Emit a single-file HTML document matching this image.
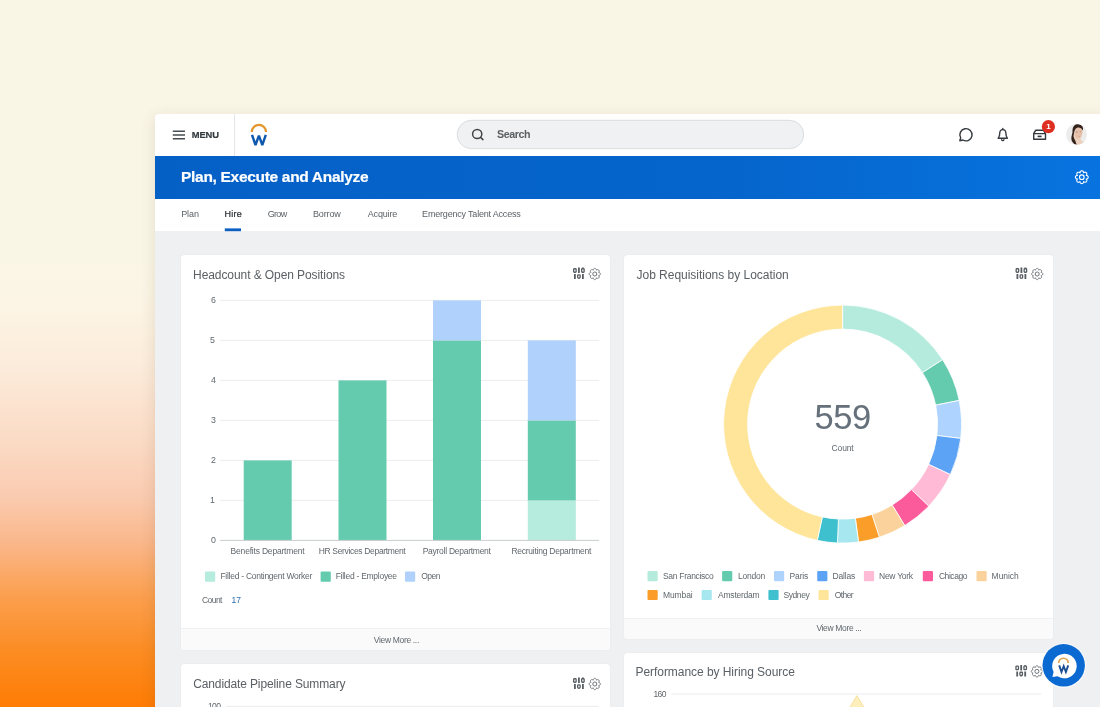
<!DOCTYPE html>
<html><head><meta charset="utf-8">
<style>
*{box-sizing:border-box;margin:0;padding:0}
html,body{width:1100px;height:707px;overflow:hidden}
body{font-family:"Liberation Sans",sans-serif;position:relative;
background:linear-gradient(180deg,#faf6e6 0%,#faf6e6 37%,#fcf4e4 43.8%,#fcebda 52.3%,#fbdcc6 61.8%,#facbb0 70.2%,#fab78b 76.7%,#fb9f4e 84.4%,#fc8c22 92.2%,#fe7c04 100%);}
.abs{position:absolute}
#win{position:absolute;left:155px;top:114px;width:960px;height:620px;background:#eef0f2;border-radius:4px 0 0 0;box-shadow:-2px 2px 14px rgba(70,50,10,.10);overflow:hidden}
#nav{position:absolute;left:0;top:0;width:100%;height:42px;background:#fff}
#hdr{position:absolute;left:0;top:42px;width:100%;height:43px;background:linear-gradient(90deg,#0560c6 0%,#0565cc 60%,#0874e0 100%)}
#tabs{position:absolute;left:0;top:85px;width:100%;height:32px;background:#fff}
.card{position:absolute;background:#fff;border-radius:3px;box-shadow:0 0 1px rgba(0,0,0,.12);overflow:hidden}
.vm{position:absolute;left:0;bottom:0;width:100%;background:#fafafa;border-top:1px solid #f0f1f2}
#tx{position:absolute;left:0;top:0;width:1100px;height:707px;will-change:transform}
.t{position:absolute;white-space:nowrap;line-height:1}
</style></head><body>
<div id="win">
<div id="nav"></div>
<div id="hdr"></div>
<div id="tabs"></div>
<div class="card" style="left:26px;top:141px;width:429px;height:395px"><div class="vm" style="height:22px"></div></div>
<div class="card" style="left:469px;top:141px;width:429px;height:384px"><div class="vm" style="height:21px"></div></div>
<div class="card" style="left:26px;top:550px;width:429px;height:100px"></div>
<div class="card" style="left:469px;top:539px;width:429px;height:100px"></div>
</div>
<svg class="abs" style="left:0;top:0" width="1100" height="707" viewBox="0 0 1100 707">
<defs><radialGradient id="fabsh"><stop offset="0.85" stop-color="#1c3a66" stop-opacity="0.25"/><stop offset="1" stop-color="#1c3a66" stop-opacity="0"/></radialGradient></defs>
<!-- nav icons -->
<path d="M172.8 131.3H185M172.8 135H185M172.8 138.7H185" stroke="#474d52" stroke-width="1.5"/>
<path d="M234.5 114V156" stroke="#e4e6e8" stroke-width="1"/>
<path d="M251.75 132A7.15 7.15 0 0 1 266.05 132" fill="none" stroke="#e3962c" stroke-width="2.3"/>
<path d="M252 134.8L255.5 145L258.9 135.7L262.3 145L265.8 134.8" fill="none" stroke="#0f58ad" stroke-width="2.4" stroke-linejoin="miter" stroke-miterlimit="2"/>
<rect x="457.2" y="120.3" width="346.5" height="28.4" rx="14.2" fill="#f0f1f2" stroke="#dadde0" stroke-width="1"/>
<circle cx="477.2" cy="134" r="4.6" fill="none" stroke="#3f4549" stroke-width="1.5"/><path d="M480.6 137.4L483 139.6" stroke="#3f4549" stroke-width="1.5" stroke-linecap="round"/>
<!-- chat -->
<path d="M959.8 140.7L960.7 137.8A6.1 6.1 0 1 1 962.9 140Z" fill="none" stroke="#33393e" stroke-width="1.4" stroke-linejoin="round"/>
<!-- bell -->
<path d="M998.2 138.2H1007.4C1006.2 137 1005.9 136 1005.9 133.6C1005.9 131.2 1004.6 129.6 1002.8 129.6C1001 129.6 999.7 131.2 999.7 133.6C999.7 136 999.4 137 998.2 138.2Z" fill="none" stroke="#33393e" stroke-width="1.4" stroke-linejoin="round"/>
<path d="M1002.8 129.4V128.4M1001.6 139.8A1.3 1.3 0 0 0 1004 139.8" fill="none" stroke="#33393e" stroke-width="1.4" stroke-linecap="round"/>
<!-- inbox -->
<path d="M1033.7 133.6L1035.6 130.3H1043.6L1045.5 133.6V139.2H1033.7ZM1033.7 133.6H1045.5" fill="none" stroke="#33393e" stroke-width="1.4" stroke-linejoin="round"/>
<path d="M1037.6 136.4H1041.6" stroke="#33393e" stroke-width="1.6"/>
<circle cx="1048.4" cy="126.7" r="6.6" fill="#de2e21"/>
<!-- avatar -->
<clipPath id="av"><circle cx="1076.5" cy="134.5" r="10.5"/></clipPath>
<g clip-path="url(#av)"><rect x="1065" y="123" width="23" height="23" fill="#ececec"/>
<path d="M1073.2 133L1078.1 138.7L1080.5 137.7L1081.2 140.6L1083.9 142L1083.6 145.4L1075.6 145.2L1073.4 140.6Z" fill="#ecd0be"/>
<path d="M1075.2 129.5L1078.1 127.6L1081 128.3L1082.4 130.5C1082.6 132 1082.5 133.4 1082.2 134.4C1081.8 135.8 1081.2 137 1080.5 137.7C1079.6 138.6 1078.8 138.8 1078.1 138.7C1077.2 138.5 1076.3 137.9 1075.7 137.2C1074.8 136.3 1074.3 135.4 1074.2 134.4Z" fill="#e6c0a9"/>
<path d="M1072.5 132.4C1072.3 130.6 1072.5 129 1073 127.6C1073.5 126.3 1074.2 125.4 1075.2 124.7C1076.1 124.2 1077.1 124 1078.1 124C1079.3 124.1 1080.5 124.5 1081.4 125.2C1082.5 126.2 1083.1 127.6 1083.1 129.1L1082.4 130.5C1082.1 129.5 1081.6 128.8 1081 128.3C1080 127.8 1079 127.6 1078.1 127.6C1076.8 127.9 1075.8 128.6 1075.2 129.5C1074.6 130.5 1074.3 131.4 1074.2 132.4C1073.8 133.8 1073.5 135 1073.5 136.3C1073.8 137.8 1074.4 139.3 1075.2 140.6L1076.6 144.4L1074.2 144C1073.2 143.2 1072.4 142.2 1071.8 141.1C1071.4 139.8 1071.3 138.5 1071.4 137.2C1071.6 135.6 1072 134 1072.5 132.4Z" fill="#35221b"/>
<ellipse cx="1076.9" cy="132" rx="0.9" ry="0.4" fill="#4a3228" opacity="0.6"/><ellipse cx="1080.3" cy="131.8" rx="0.8" ry="0.4" fill="#4a3228" opacity="0.6"/><ellipse cx="1079.2" cy="136.6" rx="1" ry="0.45" fill="#d27f78" opacity="0.7"/>
</g>
<!-- header gear -->
<path d="M1081.80 170.80L1081.97 170.81L1082.13 170.84L1082.30 170.88L1082.46 170.94L1082.61 171.02L1082.76 171.12L1082.91 171.23L1083.04 171.36L1083.17 171.51L1083.28 171.67L1083.39 171.85L1083.48 172.04L1083.55 172.25L1083.61 172.49L1083.61 172.82L1083.85 172.59L1084.06 172.46L1084.26 172.37L1084.46 172.29L1084.66 172.24L1084.86 172.21L1085.05 172.20L1085.24 172.20L1085.42 172.22L1085.59 172.26L1085.76 172.31L1085.92 172.38L1086.06 172.46L1086.20 172.56L1086.33 172.67L1086.44 172.80L1086.54 172.94L1086.62 173.08L1086.69 173.24L1086.74 173.41L1086.78 173.58L1086.80 173.76L1086.80 173.95L1086.79 174.14L1086.76 174.34L1086.71 174.54L1086.63 174.74L1086.54 174.94L1086.41 175.15L1086.18 175.39L1086.51 175.39L1086.75 175.45L1086.96 175.52L1087.15 175.61L1087.33 175.72L1087.49 175.83L1087.64 175.96L1087.77 176.09L1087.88 176.24L1087.98 176.39L1088.06 176.54L1088.12 176.70L1088.16 176.87L1088.19 177.03L1088.20 177.20L1088.19 177.37L1088.16 177.53L1088.12 177.70L1088.06 177.86L1087.98 178.01L1087.88 178.16L1087.77 178.31L1087.64 178.44L1087.49 178.57L1087.33 178.68L1087.15 178.79L1086.96 178.88L1086.75 178.95L1086.51 179.01L1086.18 179.01L1086.41 179.25L1086.54 179.46L1086.63 179.66L1086.71 179.86L1086.76 180.06L1086.79 180.26L1086.80 180.45L1086.80 180.64L1086.78 180.82L1086.74 180.99L1086.69 181.16L1086.62 181.32L1086.54 181.46L1086.44 181.60L1086.33 181.73L1086.20 181.84L1086.06 181.94L1085.92 182.02L1085.76 182.09L1085.59 182.14L1085.42 182.18L1085.24 182.20L1085.05 182.20L1084.86 182.19L1084.66 182.16L1084.46 182.11L1084.26 182.03L1084.06 181.94L1083.85 181.81L1083.61 181.58L1083.61 181.91L1083.55 182.15L1083.48 182.36L1083.39 182.55L1083.28 182.73L1083.17 182.89L1083.04 183.04L1082.91 183.17L1082.76 183.28L1082.61 183.38L1082.46 183.46L1082.30 183.52L1082.13 183.56L1081.97 183.59L1081.80 183.60L1081.63 183.59L1081.47 183.56L1081.30 183.52L1081.14 183.46L1080.99 183.38L1080.84 183.28L1080.69 183.17L1080.56 183.04L1080.43 182.89L1080.32 182.73L1080.21 182.55L1080.12 182.36L1080.05 182.15L1079.99 181.91L1079.99 181.58L1079.75 181.81L1079.54 181.94L1079.34 182.03L1079.14 182.11L1078.94 182.16L1078.74 182.19L1078.55 182.20L1078.36 182.20L1078.18 182.18L1078.01 182.14L1077.84 182.09L1077.68 182.02L1077.54 181.94L1077.40 181.84L1077.27 181.73L1077.16 181.60L1077.06 181.46L1076.98 181.32L1076.91 181.16L1076.86 180.99L1076.82 180.82L1076.80 180.64L1076.80 180.45L1076.81 180.26L1076.84 180.06L1076.89 179.86L1076.97 179.66L1077.06 179.46L1077.19 179.25L1077.42 179.01L1077.09 179.01L1076.85 178.95L1076.64 178.88L1076.45 178.79L1076.27 178.68L1076.11 178.57L1075.96 178.44L1075.83 178.31L1075.72 178.16L1075.62 178.01L1075.54 177.86L1075.48 177.70L1075.44 177.53L1075.41 177.37L1075.40 177.20L1075.41 177.03L1075.44 176.87L1075.48 176.70L1075.54 176.54L1075.62 176.39L1075.72 176.24L1075.83 176.09L1075.96 175.96L1076.11 175.83L1076.27 175.72L1076.45 175.61L1076.64 175.52L1076.85 175.45L1077.09 175.39L1077.42 175.39L1077.19 175.15L1077.06 174.94L1076.97 174.74L1076.89 174.54L1076.84 174.34L1076.81 174.14L1076.80 173.95L1076.80 173.76L1076.82 173.58L1076.86 173.41L1076.91 173.24L1076.98 173.08L1077.06 172.94L1077.16 172.80L1077.27 172.67L1077.40 172.56L1077.54 172.46L1077.68 172.38L1077.84 172.31L1078.01 172.26L1078.18 172.22L1078.36 172.20L1078.55 172.20L1078.74 172.21L1078.94 172.24L1079.14 172.29L1079.34 172.37L1079.54 172.46L1079.75 172.59L1079.99 172.82L1079.99 172.49L1080.05 172.25L1080.12 172.04L1080.21 171.85L1080.32 171.67L1080.43 171.51L1080.56 171.36L1080.69 171.23L1080.84 171.12L1080.99 171.02L1081.14 170.94L1081.30 170.88L1081.47 170.84L1081.63 170.81Z" fill="none" stroke="#ffffff" stroke-width="1.1" stroke-linejoin="round"/><circle cx="1081.8" cy="177.2" r="2.30" fill="none" stroke="#ffffff" stroke-width="1.1"/>
<!-- tab underline -->
<rect x="224.8" y="228.4" width="16.2" height="2.8" fill="#0b5fc0"/>
<!-- card1 chart -->
<path d="M220 300.4H599" stroke="#ecedef" stroke-width="1"/><path d="M220 340.4H599" stroke="#ecedef" stroke-width="1"/><path d="M220 380.4H599" stroke="#ecedef" stroke-width="1"/><path d="M220 420.4H599" stroke="#ecedef" stroke-width="1"/><path d="M220 460.4H599" stroke="#ecedef" stroke-width="1"/><path d="M220 500.4H599" stroke="#ecedef" stroke-width="1"/>
<rect x="243.7" y="460.4" width="48" height="80" fill="#65cbae"/>
<rect x="338.5" y="380.4" width="48" height="160" fill="#65cbae"/>
<rect x="433" y="340.4" width="48" height="200" fill="#65cbae"/>
<rect x="433" y="300.4" width="48" height="40" fill="#afd1fb"/>
<rect x="527.8" y="500.4" width="48" height="40" fill="#b5ecdd"/>
<rect x="527.8" y="420.4" width="48" height="80" fill="#65cbae"/>
<rect x="527.8" y="340.4" width="48" height="80" fill="#afd1fb"/>
<path d="M220 540.4H599" stroke="#c9cdd1" stroke-width="1"/>
<rect x="205" y="571.5" width="10.2" height="10.2" rx="1" fill="#b5ecdd"/><rect x="320.6" y="571.5" width="10.2" height="10.2" rx="1" fill="#65cbae"/><rect x="405" y="571.5" width="10.2" height="10.2" rx="1" fill="#afd1fb"/>
<g transform="translate(572.9,267.4)" fill="none" stroke="#575d62">
<path d="M2 6.7V11.7M6 0.2V5.6M6 11V11.7M10 6.7V11.7M10 0.2V1" stroke-width="1.8"/>
<rect x="0.75" y="1.35" width="2.5" height="3.5" rx="0.7" stroke-width="1.3"/><rect x="4.75" y="7.45" width="2.5" height="3.2" rx="0.7" stroke-width="1.3"/><rect x="8.75" y="1.35" width="2.5" height="3.5" rx="0.7" stroke-width="1.3"/></g><path d="M594.80 268.40L594.95 268.41L595.09 268.43L595.24 268.47L595.38 268.53L595.51 268.60L595.64 268.68L595.77 268.78L595.89 268.89L596.00 269.02L596.10 269.16L596.19 269.32L596.27 269.48L596.33 269.67L596.38 269.88L596.39 270.17L596.59 269.97L596.78 269.86L596.96 269.77L597.13 269.71L597.30 269.66L597.48 269.63L597.64 269.62L597.81 269.62L597.97 269.64L598.12 269.68L598.26 269.72L598.40 269.78L598.53 269.86L598.65 269.94L598.76 270.04L598.86 270.15L598.94 270.27L599.02 270.40L599.08 270.54L599.12 270.68L599.16 270.83L599.18 270.99L599.18 271.16L599.17 271.32L599.14 271.50L599.09 271.67L599.03 271.84L598.94 272.02L598.83 272.21L598.63 272.41L598.92 272.42L599.13 272.47L599.32 272.53L599.48 272.61L599.64 272.70L599.78 272.80L599.91 272.91L600.02 273.03L600.12 273.16L600.20 273.29L600.27 273.42L600.33 273.56L600.37 273.71L600.39 273.85L600.40 274.00L600.39 274.15L600.37 274.29L600.33 274.44L600.27 274.58L600.20 274.71L600.12 274.84L600.02 274.97L599.91 275.09L599.78 275.20L599.64 275.30L599.48 275.39L599.32 275.47L599.13 275.53L598.92 275.58L598.63 275.59L598.83 275.79L598.94 275.98L599.03 276.16L599.09 276.33L599.14 276.50L599.17 276.68L599.18 276.84L599.18 277.01L599.16 277.17L599.12 277.32L599.08 277.46L599.02 277.60L598.94 277.73L598.86 277.85L598.76 277.96L598.65 278.06L598.53 278.14L598.40 278.22L598.26 278.28L598.12 278.32L597.97 278.36L597.81 278.38L597.64 278.38L597.48 278.37L597.30 278.34L597.13 278.29L596.96 278.23L596.78 278.14L596.59 278.03L596.39 277.83L596.38 278.12L596.33 278.33L596.27 278.52L596.19 278.68L596.10 278.84L596.00 278.98L595.89 279.11L595.77 279.22L595.64 279.32L595.51 279.40L595.38 279.47L595.24 279.53L595.09 279.57L594.95 279.59L594.80 279.60L594.65 279.59L594.51 279.57L594.36 279.53L594.22 279.47L594.09 279.40L593.96 279.32L593.83 279.22L593.71 279.11L593.60 278.98L593.50 278.84L593.41 278.68L593.33 278.52L593.27 278.33L593.22 278.12L593.21 277.83L593.01 278.03L592.82 278.14L592.64 278.23L592.47 278.29L592.30 278.34L592.12 278.37L591.96 278.38L591.79 278.38L591.63 278.36L591.48 278.32L591.34 278.28L591.20 278.22L591.07 278.14L590.95 278.06L590.84 277.96L590.74 277.85L590.66 277.73L590.58 277.60L590.52 277.46L590.48 277.32L590.44 277.17L590.42 277.01L590.42 276.84L590.43 276.68L590.46 276.50L590.51 276.33L590.57 276.16L590.66 275.98L590.77 275.79L590.97 275.59L590.68 275.58L590.47 275.53L590.28 275.47L590.12 275.39L589.96 275.30L589.82 275.20L589.69 275.09L589.58 274.97L589.48 274.84L589.40 274.71L589.33 274.58L589.27 274.44L589.23 274.29L589.21 274.15L589.20 274.00L589.21 273.85L589.23 273.71L589.27 273.56L589.33 273.42L589.40 273.29L589.48 273.16L589.58 273.03L589.69 272.91L589.82 272.80L589.96 272.70L590.12 272.61L590.28 272.53L590.47 272.47L590.68 272.42L590.97 272.41L590.77 272.21L590.66 272.02L590.57 271.84L590.51 271.67L590.46 271.50L590.43 271.32L590.42 271.16L590.42 270.99L590.44 270.83L590.48 270.68L590.52 270.54L590.58 270.40L590.66 270.27L590.74 270.15L590.84 270.04L590.95 269.94L591.07 269.86L591.20 269.78L591.34 269.72L591.48 269.68L591.63 269.64L591.79 269.62L591.96 269.62L592.12 269.63L592.30 269.66L592.47 269.71L592.64 269.77L592.82 269.86L593.01 269.97L593.21 270.17L593.22 269.88L593.27 269.67L593.33 269.48L593.41 269.32L593.50 269.16L593.60 269.02L593.71 268.89L593.83 268.78L593.96 268.68L594.09 268.60L594.22 268.53L594.36 268.47L594.51 268.43L594.65 268.41Z" fill="none" stroke="#6c7277" stroke-width="1" stroke-linejoin="round"/><circle cx="594.8" cy="274" r="2.02" fill="none" stroke="#6c7277" stroke-width="1"/>
<g transform="translate(1015.4,267.4)" fill="none" stroke="#575d62">
<path d="M2 6.7V11.7M6 0.2V5.6M6 11V11.7M10 6.7V11.7M10 0.2V1" stroke-width="1.8"/>
<rect x="0.75" y="1.35" width="2.5" height="3.5" rx="0.7" stroke-width="1.3"/><rect x="4.75" y="7.45" width="2.5" height="3.2" rx="0.7" stroke-width="1.3"/><rect x="8.75" y="1.35" width="2.5" height="3.5" rx="0.7" stroke-width="1.3"/></g><path d="M1037.20 268.40L1037.35 268.41L1037.49 268.43L1037.64 268.47L1037.78 268.53L1037.91 268.60L1038.04 268.68L1038.17 268.78L1038.29 268.89L1038.40 269.02L1038.50 269.16L1038.59 269.32L1038.67 269.48L1038.73 269.67L1038.78 269.88L1038.79 270.17L1038.99 269.97L1039.18 269.86L1039.36 269.77L1039.53 269.71L1039.70 269.66L1039.88 269.63L1040.04 269.62L1040.21 269.62L1040.37 269.64L1040.52 269.68L1040.66 269.72L1040.80 269.78L1040.93 269.86L1041.05 269.94L1041.16 270.04L1041.26 270.15L1041.34 270.27L1041.42 270.40L1041.48 270.54L1041.52 270.68L1041.56 270.83L1041.58 270.99L1041.58 271.16L1041.57 271.32L1041.54 271.50L1041.49 271.67L1041.43 271.84L1041.34 272.02L1041.23 272.21L1041.03 272.41L1041.32 272.42L1041.53 272.47L1041.72 272.53L1041.88 272.61L1042.04 272.70L1042.18 272.80L1042.31 272.91L1042.42 273.03L1042.52 273.16L1042.60 273.29L1042.67 273.42L1042.73 273.56L1042.77 273.71L1042.79 273.85L1042.80 274.00L1042.79 274.15L1042.77 274.29L1042.73 274.44L1042.67 274.58L1042.60 274.71L1042.52 274.84L1042.42 274.97L1042.31 275.09L1042.18 275.20L1042.04 275.30L1041.88 275.39L1041.72 275.47L1041.53 275.53L1041.32 275.58L1041.03 275.59L1041.23 275.79L1041.34 275.98L1041.43 276.16L1041.49 276.33L1041.54 276.50L1041.57 276.68L1041.58 276.84L1041.58 277.01L1041.56 277.17L1041.52 277.32L1041.48 277.46L1041.42 277.60L1041.34 277.73L1041.26 277.85L1041.16 277.96L1041.05 278.06L1040.93 278.14L1040.80 278.22L1040.66 278.28L1040.52 278.32L1040.37 278.36L1040.21 278.38L1040.04 278.38L1039.88 278.37L1039.70 278.34L1039.53 278.29L1039.36 278.23L1039.18 278.14L1038.99 278.03L1038.79 277.83L1038.78 278.12L1038.73 278.33L1038.67 278.52L1038.59 278.68L1038.50 278.84L1038.40 278.98L1038.29 279.11L1038.17 279.22L1038.04 279.32L1037.91 279.40L1037.78 279.47L1037.64 279.53L1037.49 279.57L1037.35 279.59L1037.20 279.60L1037.05 279.59L1036.91 279.57L1036.76 279.53L1036.62 279.47L1036.49 279.40L1036.36 279.32L1036.23 279.22L1036.11 279.11L1036.00 278.98L1035.90 278.84L1035.81 278.68L1035.73 278.52L1035.67 278.33L1035.62 278.12L1035.61 277.83L1035.41 278.03L1035.22 278.14L1035.04 278.23L1034.87 278.29L1034.70 278.34L1034.52 278.37L1034.36 278.38L1034.19 278.38L1034.03 278.36L1033.88 278.32L1033.74 278.28L1033.60 278.22L1033.47 278.14L1033.35 278.06L1033.24 277.96L1033.14 277.85L1033.06 277.73L1032.98 277.60L1032.92 277.46L1032.88 277.32L1032.84 277.17L1032.82 277.01L1032.82 276.84L1032.83 276.68L1032.86 276.50L1032.91 276.33L1032.97 276.16L1033.06 275.98L1033.17 275.79L1033.37 275.59L1033.08 275.58L1032.87 275.53L1032.68 275.47L1032.52 275.39L1032.36 275.30L1032.22 275.20L1032.09 275.09L1031.98 274.97L1031.88 274.84L1031.80 274.71L1031.73 274.58L1031.67 274.44L1031.63 274.29L1031.61 274.15L1031.60 274.00L1031.61 273.85L1031.63 273.71L1031.67 273.56L1031.73 273.42L1031.80 273.29L1031.88 273.16L1031.98 273.03L1032.09 272.91L1032.22 272.80L1032.36 272.70L1032.52 272.61L1032.68 272.53L1032.87 272.47L1033.08 272.42L1033.37 272.41L1033.17 272.21L1033.06 272.02L1032.97 271.84L1032.91 271.67L1032.86 271.50L1032.83 271.32L1032.82 271.16L1032.82 270.99L1032.84 270.83L1032.88 270.68L1032.92 270.54L1032.98 270.40L1033.06 270.27L1033.14 270.15L1033.24 270.04L1033.35 269.94L1033.47 269.86L1033.60 269.78L1033.74 269.72L1033.88 269.68L1034.03 269.64L1034.19 269.62L1034.36 269.62L1034.52 269.63L1034.70 269.66L1034.87 269.71L1035.04 269.77L1035.22 269.86L1035.41 269.97L1035.61 270.17L1035.62 269.88L1035.67 269.67L1035.73 269.48L1035.81 269.32L1035.90 269.16L1036.00 269.02L1036.11 268.89L1036.23 268.78L1036.36 268.68L1036.49 268.60L1036.62 268.53L1036.76 268.47L1036.91 268.43L1037.05 268.41Z" fill="none" stroke="#6c7277" stroke-width="1" stroke-linejoin="round"/><circle cx="1037.2" cy="274" r="2.02" fill="none" stroke="#6c7277" stroke-width="1"/>
<g transform="translate(572.9,677.4)" fill="none" stroke="#575d62">
<path d="M2 6.7V11.7M6 0.2V5.6M6 11V11.7M10 6.7V11.7M10 0.2V1" stroke-width="1.8"/>
<rect x="0.75" y="1.35" width="2.5" height="3.5" rx="0.7" stroke-width="1.3"/><rect x="4.75" y="7.45" width="2.5" height="3.2" rx="0.7" stroke-width="1.3"/><rect x="8.75" y="1.35" width="2.5" height="3.5" rx="0.7" stroke-width="1.3"/></g><path d="M594.80 678.40L594.95 678.41L595.09 678.43L595.24 678.47L595.38 678.53L595.51 678.60L595.64 678.68L595.77 678.78L595.89 678.89L596.00 679.02L596.10 679.16L596.19 679.32L596.27 679.48L596.33 679.67L596.38 679.88L596.39 680.17L596.59 679.97L596.78 679.86L596.96 679.77L597.13 679.71L597.30 679.66L597.48 679.63L597.64 679.62L597.81 679.62L597.97 679.64L598.12 679.68L598.26 679.72L598.40 679.78L598.53 679.86L598.65 679.94L598.76 680.04L598.86 680.15L598.94 680.27L599.02 680.40L599.08 680.54L599.12 680.68L599.16 680.83L599.18 680.99L599.18 681.16L599.17 681.32L599.14 681.50L599.09 681.67L599.03 681.84L598.94 682.02L598.83 682.21L598.63 682.41L598.92 682.42L599.13 682.47L599.32 682.53L599.48 682.61L599.64 682.70L599.78 682.80L599.91 682.91L600.02 683.03L600.12 683.16L600.20 683.29L600.27 683.42L600.33 683.56L600.37 683.71L600.39 683.85L600.40 684.00L600.39 684.15L600.37 684.29L600.33 684.44L600.27 684.58L600.20 684.71L600.12 684.84L600.02 684.97L599.91 685.09L599.78 685.20L599.64 685.30L599.48 685.39L599.32 685.47L599.13 685.53L598.92 685.58L598.63 685.59L598.83 685.79L598.94 685.98L599.03 686.16L599.09 686.33L599.14 686.50L599.17 686.68L599.18 686.84L599.18 687.01L599.16 687.17L599.12 687.32L599.08 687.46L599.02 687.60L598.94 687.73L598.86 687.85L598.76 687.96L598.65 688.06L598.53 688.14L598.40 688.22L598.26 688.28L598.12 688.32L597.97 688.36L597.81 688.38L597.64 688.38L597.48 688.37L597.30 688.34L597.13 688.29L596.96 688.23L596.78 688.14L596.59 688.03L596.39 687.83L596.38 688.12L596.33 688.33L596.27 688.52L596.19 688.68L596.10 688.84L596.00 688.98L595.89 689.11L595.77 689.22L595.64 689.32L595.51 689.40L595.38 689.47L595.24 689.53L595.09 689.57L594.95 689.59L594.80 689.60L594.65 689.59L594.51 689.57L594.36 689.53L594.22 689.47L594.09 689.40L593.96 689.32L593.83 689.22L593.71 689.11L593.60 688.98L593.50 688.84L593.41 688.68L593.33 688.52L593.27 688.33L593.22 688.12L593.21 687.83L593.01 688.03L592.82 688.14L592.64 688.23L592.47 688.29L592.30 688.34L592.12 688.37L591.96 688.38L591.79 688.38L591.63 688.36L591.48 688.32L591.34 688.28L591.20 688.22L591.07 688.14L590.95 688.06L590.84 687.96L590.74 687.85L590.66 687.73L590.58 687.60L590.52 687.46L590.48 687.32L590.44 687.17L590.42 687.01L590.42 686.84L590.43 686.68L590.46 686.50L590.51 686.33L590.57 686.16L590.66 685.98L590.77 685.79L590.97 685.59L590.68 685.58L590.47 685.53L590.28 685.47L590.12 685.39L589.96 685.30L589.82 685.20L589.69 685.09L589.58 684.97L589.48 684.84L589.40 684.71L589.33 684.58L589.27 684.44L589.23 684.29L589.21 684.15L589.20 684.00L589.21 683.85L589.23 683.71L589.27 683.56L589.33 683.42L589.40 683.29L589.48 683.16L589.58 683.03L589.69 682.91L589.82 682.80L589.96 682.70L590.12 682.61L590.28 682.53L590.47 682.47L590.68 682.42L590.97 682.41L590.77 682.21L590.66 682.02L590.57 681.84L590.51 681.67L590.46 681.50L590.43 681.32L590.42 681.16L590.42 680.99L590.44 680.83L590.48 680.68L590.52 680.54L590.58 680.40L590.66 680.27L590.74 680.15L590.84 680.04L590.95 679.94L591.07 679.86L591.20 679.78L591.34 679.72L591.48 679.68L591.63 679.64L591.79 679.62L591.96 679.62L592.12 679.63L592.30 679.66L592.47 679.71L592.64 679.77L592.82 679.86L593.01 679.97L593.21 680.17L593.22 679.88L593.27 679.67L593.33 679.48L593.41 679.32L593.50 679.16L593.60 679.02L593.71 678.89L593.83 678.78L593.96 678.68L594.09 678.60L594.22 678.53L594.36 678.47L594.51 678.43L594.65 678.41Z" fill="none" stroke="#6c7277" stroke-width="1" stroke-linejoin="round"/><circle cx="594.8" cy="684" r="2.02" fill="none" stroke="#6c7277" stroke-width="1"/>
<g transform="translate(1015.2,664.8)" fill="none" stroke="#575d62">
<path d="M2 6.7V11.7M6 0.2V5.6M6 11V11.7M10 6.7V11.7M10 0.2V1" stroke-width="1.8"/>
<rect x="0.75" y="1.35" width="2.5" height="3.5" rx="0.7" stroke-width="1.3"/><rect x="4.75" y="7.45" width="2.5" height="3.2" rx="0.7" stroke-width="1.3"/><rect x="8.75" y="1.35" width="2.5" height="3.5" rx="0.7" stroke-width="1.3"/></g><path d="M1036.90 665.80L1037.05 665.81L1037.19 665.83L1037.34 665.87L1037.48 665.93L1037.61 666.00L1037.74 666.08L1037.87 666.18L1037.99 666.29L1038.10 666.42L1038.20 666.56L1038.29 666.72L1038.37 666.88L1038.43 667.07L1038.48 667.28L1038.49 667.57L1038.69 667.37L1038.88 667.26L1039.06 667.17L1039.23 667.11L1039.40 667.06L1039.58 667.03L1039.74 667.02L1039.91 667.02L1040.07 667.04L1040.22 667.08L1040.36 667.12L1040.50 667.18L1040.63 667.26L1040.75 667.34L1040.86 667.44L1040.96 667.55L1041.04 667.67L1041.12 667.80L1041.18 667.94L1041.22 668.08L1041.26 668.23L1041.28 668.39L1041.28 668.56L1041.27 668.72L1041.24 668.90L1041.19 669.07L1041.13 669.24L1041.04 669.42L1040.93 669.61L1040.73 669.81L1041.02 669.82L1041.23 669.87L1041.42 669.93L1041.58 670.01L1041.74 670.10L1041.88 670.20L1042.01 670.31L1042.12 670.43L1042.22 670.56L1042.30 670.69L1042.37 670.82L1042.43 670.96L1042.47 671.11L1042.49 671.25L1042.50 671.40L1042.49 671.55L1042.47 671.69L1042.43 671.84L1042.37 671.98L1042.30 672.11L1042.22 672.24L1042.12 672.37L1042.01 672.49L1041.88 672.60L1041.74 672.70L1041.58 672.79L1041.42 672.87L1041.23 672.93L1041.02 672.98L1040.73 672.99L1040.93 673.19L1041.04 673.38L1041.13 673.56L1041.19 673.73L1041.24 673.90L1041.27 674.08L1041.28 674.24L1041.28 674.41L1041.26 674.57L1041.22 674.72L1041.18 674.86L1041.12 675.00L1041.04 675.13L1040.96 675.25L1040.86 675.36L1040.75 675.46L1040.63 675.54L1040.50 675.62L1040.36 675.68L1040.22 675.72L1040.07 675.76L1039.91 675.78L1039.74 675.78L1039.58 675.77L1039.40 675.74L1039.23 675.69L1039.06 675.63L1038.88 675.54L1038.69 675.43L1038.49 675.23L1038.48 675.52L1038.43 675.73L1038.37 675.92L1038.29 676.08L1038.20 676.24L1038.10 676.38L1037.99 676.51L1037.87 676.62L1037.74 676.72L1037.61 676.80L1037.48 676.87L1037.34 676.93L1037.19 676.97L1037.05 676.99L1036.90 677.00L1036.75 676.99L1036.61 676.97L1036.46 676.93L1036.32 676.87L1036.19 676.80L1036.06 676.72L1035.93 676.62L1035.81 676.51L1035.70 676.38L1035.60 676.24L1035.51 676.08L1035.43 675.92L1035.37 675.73L1035.32 675.52L1035.31 675.23L1035.11 675.43L1034.92 675.54L1034.74 675.63L1034.57 675.69L1034.40 675.74L1034.22 675.77L1034.06 675.78L1033.89 675.78L1033.73 675.76L1033.58 675.72L1033.44 675.68L1033.30 675.62L1033.17 675.54L1033.05 675.46L1032.94 675.36L1032.84 675.25L1032.76 675.13L1032.68 675.00L1032.62 674.86L1032.58 674.72L1032.54 674.57L1032.52 674.41L1032.52 674.24L1032.53 674.08L1032.56 673.90L1032.61 673.73L1032.67 673.56L1032.76 673.38L1032.87 673.19L1033.07 672.99L1032.78 672.98L1032.57 672.93L1032.38 672.87L1032.22 672.79L1032.06 672.70L1031.92 672.60L1031.79 672.49L1031.68 672.37L1031.58 672.24L1031.50 672.11L1031.43 671.98L1031.37 671.84L1031.33 671.69L1031.31 671.55L1031.30 671.40L1031.31 671.25L1031.33 671.11L1031.37 670.96L1031.43 670.82L1031.50 670.69L1031.58 670.56L1031.68 670.43L1031.79 670.31L1031.92 670.20L1032.06 670.10L1032.22 670.01L1032.38 669.93L1032.57 669.87L1032.78 669.82L1033.07 669.81L1032.87 669.61L1032.76 669.42L1032.67 669.24L1032.61 669.07L1032.56 668.90L1032.53 668.72L1032.52 668.56L1032.52 668.39L1032.54 668.23L1032.58 668.08L1032.62 667.94L1032.68 667.80L1032.76 667.67L1032.84 667.55L1032.94 667.44L1033.05 667.34L1033.17 667.26L1033.30 667.18L1033.44 667.12L1033.58 667.08L1033.73 667.04L1033.89 667.02L1034.06 667.02L1034.22 667.03L1034.40 667.06L1034.57 667.11L1034.74 667.17L1034.92 667.26L1035.11 667.37L1035.31 667.57L1035.32 667.28L1035.37 667.07L1035.43 666.88L1035.51 666.72L1035.60 666.56L1035.70 666.42L1035.81 666.29L1035.93 666.18L1036.06 666.08L1036.19 666.00L1036.32 665.93L1036.46 665.87L1036.61 665.83L1036.75 665.81Z" fill="none" stroke="#6c7277" stroke-width="1" stroke-linejoin="round"/><circle cx="1036.9" cy="671.4" r="2.02" fill="none" stroke="#6c7277" stroke-width="1"/>
<!-- donut -->
<path d="M842.60 305.10A119 119 0 0 1 942.63 359.64L922.45 372.64A95 95 0 0 0 842.60 329.10Z" fill="#b5ebdd" stroke="#fff" stroke-width="0.8"/>
<path d="M942.63 359.64A119 119 0 0 1 959.21 400.38L935.69 405.16A95 95 0 0 0 922.45 372.64Z" fill="#65cbae" stroke="#fff" stroke-width="0.8"/>
<path d="M959.21 400.38A119 119 0 0 1 960.74 438.40L936.91 435.51A95 95 0 0 0 935.69 405.16Z" fill="#afd3ff" stroke="#fff" stroke-width="0.8"/>
<path d="M960.74 438.40A119 119 0 0 1 950.36 474.58L928.63 464.40A95 95 0 0 0 936.91 435.51Z" fill="#5da3f5" stroke="#fff" stroke-width="0.8"/>
<path d="M950.36 474.58A119 119 0 0 1 928.78 506.16L911.40 489.61A95 95 0 0 0 928.63 464.40Z" fill="#ffbbd6" stroke="#fff" stroke-width="0.8"/>
<path d="M928.78 506.16A119 119 0 0 1 904.78 525.56L892.24 505.10A95 95 0 0 0 911.40 489.61Z" fill="#fb5a9b" stroke="#fff" stroke-width="0.8"/>
<path d="M904.78 525.56A119 119 0 0 1 879.37 537.28L871.96 514.45A95 95 0 0 0 892.24 505.10Z" fill="#fbd29b" stroke="#fff" stroke-width="0.8"/>
<path d="M879.37 537.28A119 119 0 0 1 858.54 542.03L855.33 518.24A95 95 0 0 0 871.96 514.45Z" fill="#fa9e29" stroke="#fff" stroke-width="0.8"/>
<path d="M858.54 542.03A119 119 0 0 1 837.41 542.99L838.46 519.01A95 95 0 0 0 855.33 518.24Z" fill="#a7e7f0" stroke="#fff" stroke-width="0.8"/>
<path d="M837.41 542.99A119 119 0 0 1 817.25 540.37L822.36 516.92A95 95 0 0 0 838.46 519.01Z" fill="#3ec0ce" stroke="#fff" stroke-width="0.8"/>
<path d="M817.25 540.37A119 119 0 0 1 842.60 305.10L842.60 329.10A95 95 0 0 0 822.36 516.92Z" fill="#fee599" stroke="#fff" stroke-width="0.8"/>
<rect x="647.5" y="571.1" width="10.2" height="10.2" rx="1" fill="#b5ebdd"/><rect x="722.1" y="571.1" width="10.2" height="10.2" rx="1" fill="#65cbae"/><rect x="774" y="571.1" width="10.2" height="10.2" rx="1" fill="#afd3ff"/><rect x="817.2" y="571.1" width="10.2" height="10.2" rx="1" fill="#5da3f5"/><rect x="863.9" y="571.1" width="10.2" height="10.2" rx="1" fill="#ffbbd6"/><rect x="922.8" y="571.1" width="10.2" height="10.2" rx="1" fill="#fb5a9b"/><rect x="976.5" y="571.1" width="10.2" height="10.2" rx="1" fill="#fbd29b"/><rect x="647.5" y="589.9" width="10.2" height="10.2" rx="1" fill="#fa9e29"/><rect x="701.6" y="589.9" width="10.2" height="10.2" rx="1" fill="#a7e7f0"/><rect x="768.4" y="589.9" width="10.2" height="10.2" rx="1" fill="#3ec0ce"/><rect x="818.5" y="589.9" width="10.2" height="10.2" rx="1" fill="#fee599"/>
<!-- card3/4 partial -->
<path d="M226 706.3H599" stroke="#e9ebed" stroke-width="1"/>
<path d="M671.5 694H1041" stroke="#e9ebed" stroke-width="1"/>
<path d="M856.9 695.6L849.4 708H864.4Z" fill="#fdeebc" stroke="#f6dd92" stroke-width="0.8"/>
<!-- chat fab -->
<circle cx="1063.7" cy="665.6" r="22.6" fill="#ffffff" fill-opacity="0.45"/>
<circle cx="1063.7" cy="665.3" r="21.2" fill="#0b6ad2"/>
<path d="M1052.4 676.9L1053.6 671.9A12.3 12.3 0 1 1 1057.6 676.3Z" fill="#fff"/>
<path d="M1058.7 663A4.75 4.75 0 0 1 1068.2 663" fill="none" stroke="#dba24a" stroke-width="1.7"/>
<path d="M1059.2 665.4L1061.5 672L1063.7 666.2L1065.9 672L1068.2 665.4" fill="none" stroke="#1a4f94" stroke-width="1.9"/>
</svg>
<div id="tx"><span class="t" style="left:1046.2px;top:122.8px;font-size:8px;font-weight:bold;color:#fff">1</span>
<span class="t" style="left:191.80px;top:130.37px;font-size:9.4px;font-weight:bold;color:#333b40;letter-spacing:-0.133px;-webkit-text-stroke:0.2px #333b40;">MENU</span>
<span class="t" style="left:497.10px;top:129.14px;font-size:10.7px;font-weight:bold;color:#5a5f63;letter-spacing:-0.440px;">Search</span>
<span class="t" style="left:181.10px;top:169.23px;font-size:15.5px;font-weight:bold;color:#ffffff;letter-spacing:-0.312px;-webkit-text-stroke:0.2px #fff;">Plan, Execute and Analyze</span>
<span class="t" style="left:181.20px;top:209.96px;font-size:9px;font-weight:normal;color:#5c6267;letter-spacing:-0.067px;">Plan</span>
<span class="t" style="left:224.40px;top:209.96px;font-size:9px;font-weight:normal;color:#262c31;letter-spacing:0.300px;-webkit-text-stroke:0.2px #262c31;">Hire</span>
<span class="t" style="left:267.70px;top:209.96px;font-size:9px;font-weight:normal;color:#5c6267;letter-spacing:-0.667px;">Grow</span>
<span class="t" style="left:313.00px;top:209.96px;font-size:9px;font-weight:normal;color:#5c6267;letter-spacing:-0.140px;">Borrow</span>
<span class="t" style="left:367.70px;top:209.96px;font-size:9px;font-weight:normal;color:#5c6267;letter-spacing:-0.150px;">Acquire</span>
<span class="t" style="left:422.10px;top:209.96px;font-size:9px;font-weight:normal;color:#5c6267;letter-spacing:-0.191px;">Emergency Talent Access</span>
<span class="t" style="left:193.10px;top:268.82px;font-size:12px;font-weight:normal;color:#5a6065;letter-spacing:-0.084px;">Headcount &amp; Open Positions</span>
<span class="t" style="left:636.50px;top:268.82px;font-size:12px;font-weight:normal;color:#5a6065;letter-spacing:-0.019px;">Job Requisitions by Location</span>
<span class="t" style="left:193.20px;top:678.22px;font-size:12px;font-weight:normal;color:#5a6065;letter-spacing:-0.124px;">Candidate Pipeline Summary</span>
<span class="t" style="left:635.50px;top:666.02px;font-size:12px;font-weight:normal;color:#5a6065;letter-spacing:-0.052px;">Performance by Hiring Source</span>
<span class="t" style="left:230.60px;top:546.90px;font-size:8.5px;font-weight:normal;color:#61676c;letter-spacing:-0.194px;">Benefits Department</span>
<span class="t" style="left:318.70px;top:546.90px;font-size:8.5px;font-weight:normal;color:#61676c;letter-spacing:-0.333px;">HR Services Department</span>
<span class="t" style="left:422.70px;top:546.90px;font-size:8.5px;font-weight:normal;color:#61676c;letter-spacing:-0.265px;">Payroll Department</span>
<span class="t" style="left:511.40px;top:546.90px;font-size:8.5px;font-weight:normal;color:#61676c;letter-spacing:-0.250px;">Recruiting Department</span>
<span class="t" style="left:220.40px;top:572.30px;font-size:8.5px;font-weight:normal;color:#61676c;letter-spacing:-0.264px;">Filled - Contingent Worker</span>
<span class="t" style="left:335.70px;top:572.30px;font-size:8.5px;font-weight:normal;color:#61676c;letter-spacing:-0.269px;">Filled - Employee</span>
<span class="t" style="left:421.20px;top:572.30px;font-size:8.5px;font-weight:normal;color:#61676c;letter-spacing:-0.533px;">Open</span>
<span class="t" style="left:201.90px;top:596.30px;font-size:8.5px;font-weight:normal;color:#61676c;letter-spacing:-0.525px;">Count</span>
<span class="t" style="left:231.60px;top:596.30px;font-size:8.5px;font-weight:normal;color:#2f6cb0;letter-spacing:1.000px;letter-spacing:0;">17</span>
<span class="t" style="left:373.80px;top:635.50px;font-size:8.5px;font-weight:normal;color:#61676c;letter-spacing:-0.333px;">View More ...</span>
<span class="t" style="left:816.40px;top:624.30px;font-size:8.5px;font-weight:normal;color:#61676c;letter-spacing:-0.342px;">View More ...</span>
<span class="t" style="left:814.40px;top:400.17px;font-size:34.5px;font-weight:normal;color:#65707b;letter-spacing:-0.400px;">559</span>
<span class="t" style="left:831.60px;top:444.20px;font-size:8.5px;font-weight:normal;color:#61676c;letter-spacing:-0.150px;">Count</span>
<span class="t" style="left:663.00px;top:572.30px;font-size:8.5px;font-weight:normal;color:#61676c;letter-spacing:-0.300px;">San Francisco</span>
<span class="t" style="left:738.10px;top:572.30px;font-size:8.5px;font-weight:normal;color:#61676c;letter-spacing:-0.260px;">London</span>
<span class="t" style="left:789.60px;top:572.30px;font-size:8.5px;font-weight:normal;color:#61676c;letter-spacing:-0.150px;">Paris</span>
<span class="t" style="left:832.40px;top:572.30px;font-size:8.5px;font-weight:normal;color:#61676c;letter-spacing:-0.140px;">Dallas</span>
<span class="t" style="left:879.00px;top:572.30px;font-size:8.5px;font-weight:normal;color:#61676c;letter-spacing:-0.257px;">New York</span>
<span class="t" style="left:938.90px;top:572.30px;font-size:8.5px;font-weight:normal;color:#61676c;letter-spacing:-0.433px;">Chicago</span>
<span class="t" style="left:991.60px;top:572.30px;font-size:8.5px;font-weight:normal;color:#61676c;letter-spacing:-0.040px;">Munich</span>
<span class="t" style="left:663.00px;top:591.10px;font-size:8.5px;font-weight:normal;color:#61676c;letter-spacing:-0.120px;">Mumbai</span>
<span class="t" style="left:718.10px;top:591.10px;font-size:8.5px;font-weight:normal;color:#61676c;letter-spacing:-0.238px;">Amsterdam</span>
<span class="t" style="left:783.40px;top:591.10px;font-size:8.5px;font-weight:normal;color:#61676c;letter-spacing:-0.400px;">Sydney</span>
<span class="t" style="left:834.70px;top:591.10px;font-size:8.5px;font-weight:normal;color:#61676c;letter-spacing:-0.575px;">Other</span>
<span class="t" style="left:653.40px;top:689.80px;font-size:8.5px;font-weight:normal;color:#61676c;letter-spacing:-0.500px;">160</span>
<span class="t" style="left:207.90px;top:701.70px;font-size:8.5px;font-weight:normal;color:#61676c;letter-spacing:-0.550px;">100</span>
<span class="t" style="left:211.10px;top:296.16px;font-size:8.8px;font-weight:normal;color:#61676c;letter-spacing:-0.700px;">6</span>
<span class="t" style="left:210.10px;top:336.16px;font-size:8.8px;font-weight:normal;color:#61676c;letter-spacing:0.300px;">5</span>
<span class="t" style="left:211.10px;top:376.16px;font-size:8.8px;font-weight:normal;color:#61676c;letter-spacing:-0.700px;">4</span>
<span class="t" style="left:211.10px;top:416.16px;font-size:8.8px;font-weight:normal;color:#61676c;letter-spacing:-0.700px;">3</span>
<span class="t" style="left:211.10px;top:456.16px;font-size:8.8px;font-weight:normal;color:#61676c;letter-spacing:-0.700px;">2</span>
<span class="t" style="left:210.10px;top:496.16px;font-size:8.8px;font-weight:normal;color:#61676c;letter-spacing:0.300px;">1</span>
<span class="t" style="left:211.10px;top:536.16px;font-size:8.8px;font-weight:normal;color:#61676c;letter-spacing:-0.700px;">0</span></div>
</body></html>
